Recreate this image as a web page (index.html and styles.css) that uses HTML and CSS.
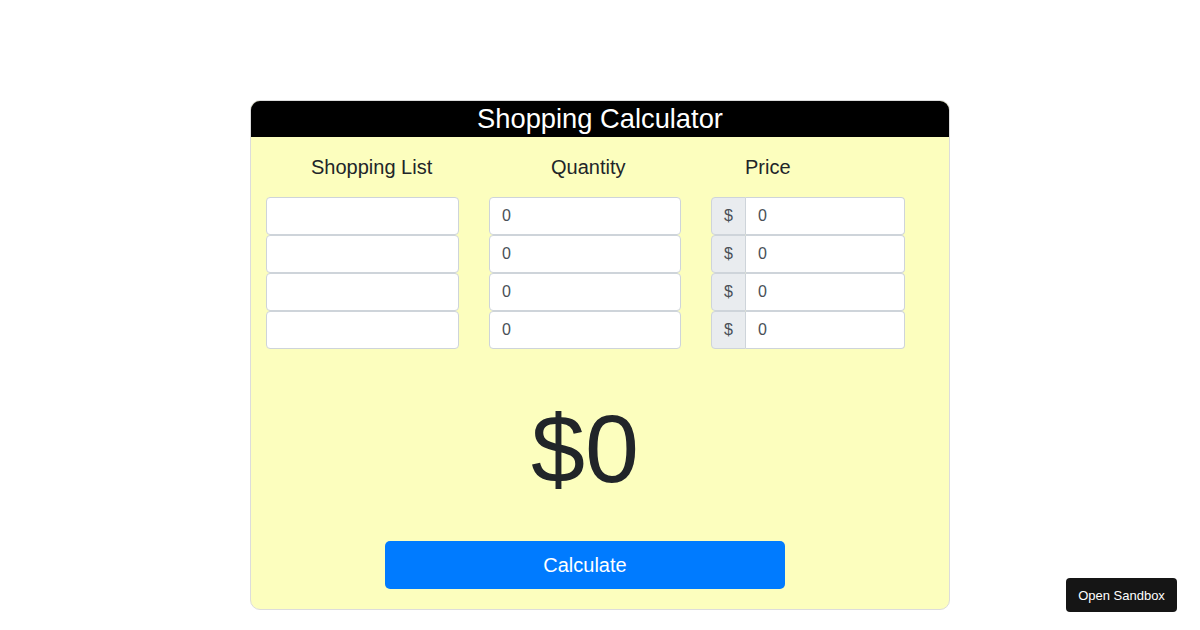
FILE: index.html
```html
<!DOCTYPE html>
<html>
<head>
<meta charset="utf-8">
<link rel="stylesheet" href="styles.css">
</head>
<body>
<div class="card">
  <div class="card-header">Shopping Calculator</div>
  <div class="card-body">
    <div class="labels">
      <div class="label label-list">Shopping List</div>
      <div class="label label-qty">Quantity</div>
      <div class="label label-price">Price</div>
    </div>
    <div class="grid">
      <div class="col">
        <input class="field" type="text">
        <input class="field" type="text">
        <input class="field" type="text">
        <input class="field" type="text">
      </div>
      <div class="col">
        <input class="field" type="text" value="0">
        <input class="field" type="text" value="0">
        <input class="field" type="text" value="0">
        <input class="field" type="text" value="0">
      </div>
      <div class="col">
        <div class="group"><span class="addon">$</span><input class="field field-price" type="text" value="0"></div>
        <div class="group"><span class="addon">$</span><input class="field field-price" type="text" value="0"></div>
        <div class="group"><span class="addon">$</span><input class="field field-price" type="text" value="0"></div>
        <div class="group"><span class="addon">$</span><input class="field field-price" type="text" value="0"></div>
      </div>
    </div>
    <div class="total">$0</div>
    <div class="actions"><button class="btn-calc">Calculate</button></div>
  </div>
</div>
<button class="sandbox">Open Sandbox</button>
</body>
</html>
```
FILE: styles.css
```css
* { box-sizing: border-box; }
html, body { margin: 0; padding: 0; background: #fff; }
body {
  font-family: "Liberation Sans", Arial, sans-serif;
  color: #212529;
  width: 1200px;
  height: 630px;
  overflow: hidden;
  position: relative;
}
.card {
  margin: 100px 0 0 250px;
  width: 700px;
  height: 510px;
  background: #fcfebe;
  border: 1px solid #dcdcdc;
  border-radius: 10px;
  overflow: hidden;
}
.card-header {
  background: #000;
  color: #fff;
  height: 36px;
  line-height: 36px;
  font-size: 27.3px;
  text-align: center;
}
.card-body {
  width: 670px;
  padding-top: 18px;
}
.labels {
  display: flex;
  height: 24px;
  font-size: 20px;
  line-height: 24px;
}
.label { white-space: nowrap; }
.label-list { margin-left: 60px; width: 223px; }
.label-qty { margin-left: 17px; width: 194px; }
.label-price { margin-left: 0; }
.grid {
  margin-top: 18px;
  display: grid;
  grid-template-columns: 223px 222px 225px;
}
.col {
  padding: 0 15px;
  display: flex;
  flex-direction: column;
}
.field {
  display: block;
  width: 100%;
  height: 38px;
  margin: 0;
  padding: 0 12px;
  font-family: "Liberation Sans", Arial, sans-serif;
  font-size: 16px;
  color: #495057;
  background: #fff;
  border: 1px solid #ced4da;
  border-radius: 4px;
  outline: none;
}
.col:first-child .field { width: 193px; }
.col:nth-child(2) .field { width: 192px; }
.group {
  display: flex;
  width: 194px;
  height: 38px;
}
.addon {
  width: 35px;
  flex: none;
  height: 38px;
  line-height: 36px;
  text-align: center;
  font-size: 16px;
  color: #495057;
  background: #e9ecef;
  border: 1px solid #ced4da;
  border-radius: 4px 0 0 4px;
}
.field-price {
  flex: 1 1 0;
  width: 0;
  min-width: 0;
  border-left: none;
  border-radius: 0 4px 4px 0;
}
.total {
  margin-top: 42px;
  padding-right: 2px;
  font-family: "Liberation Sans", Arial, sans-serif;
  font-weight: 400;
  font-size: 97px;
  line-height: 115px;
  text-align: center;
}
.actions {
  margin-top: 35px;
  display: flex;
  justify-content: center;
  padding-right: 2px;
}
.btn-calc {
  width: 400px;
  height: 48px;
  background: #007bff;
  color: #fff;
  border: none;
  border-radius: 5px;
  font-family: "Liberation Sans", Arial, sans-serif;
  font-size: 20px;
}
.sandbox {
  position: absolute;
  left: 1066px;
  top: 578px;
  width: 111px;
  height: 34px;
  background: #151515;
  color: #fff;
  border: none;
  border-radius: 4px;
  font-family: "Liberation Sans", Arial, sans-serif;
  font-size: 13px;
}
```
